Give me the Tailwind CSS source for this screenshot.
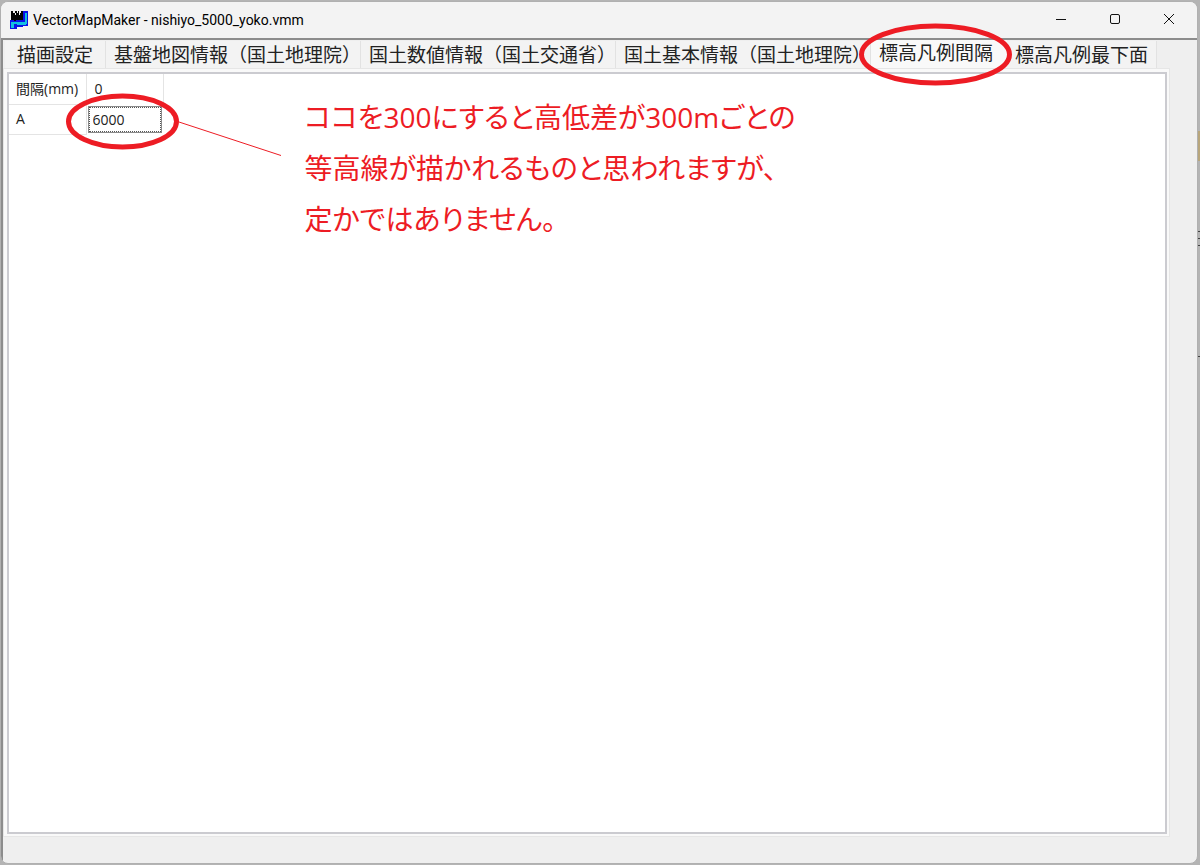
<!DOCTYPE html>
<html lang="ja">
    <head>
        <meta charset="UTF-8">
        <meta name="viewport" content="width=device-width, initial-scale=1.0">
        <title>VectorMapMaker - nishiyo_5000_yoko.vmm</title>
        <script src="https://cdn.jsdelivr.net/npm/@tailwindcss/browser@4"></script>
    </head>
    <body class="relative h-screen overflow-hidden bg-[#b4b4b4] pt-px pr-0.5 pb-px font-['Open_Sans','Noto_Sans_CJK_JP',sans-serif] text-black">

        <!-- window -->
        <div class="flex h-full flex-col overflow-hidden rounded-lg border border-[#b0b0b0] bg-[#efefef]">
            <header class="flex h-9 shrink-0 items-center bg-[#f3f3f3] pl-2">
                <svg class="h-5 w-5" viewBox="0 0 20 20" shape-rendering="crispEdges" aria-hidden="true">
                    <path d="M14 1h5v15h-5v1H8v2H1v-9h13z" fill="#0a12e8"/>
                    <path d="M16 3h2v11h-2zM2 12h6v2H5v4H2zM8 12h9v3H8z" fill="#12c0e0"/>
                    <path d="M2 1h2v2h2V1h2v2h1V1h1v2h2V1h2v9H7v1H5v-1H2z" fill="#050505"/>
                    <path d="M6 3h1v2H6zM10 3h1v2h-1z" fill="#f3f3f3"/>
                </svg>
                <h1 class="ml-1 font-['Roboto',sans-serif] text-[14px] leading-5">VectorMapMaker - nishiyo_5000_yoko.vmm</h1>
                <div class="ml-auto flex h-full">
                    <button class="flex w-14 items-center justify-center" aria-label="最小化">
                        <svg class="h-3 w-3" viewBox="0 0 12 12" fill="none" stroke="#111"><path d="M1 5.500h10"/></svg>
                    </button>
                    <button class="flex w-13 items-center justify-center" aria-label="最大化">
                        <svg class="h-3 w-3" viewBox="0 0 12 12" fill="none" stroke="#111"><rect x="1.5" y=".5" width="9" height="9" rx="1.5"/></svg>
                    </button>
                    <button class="flex w-14 items-center justify-center" aria-label="閉じる">
                        <svg class="h-3 w-3" viewBox="0 0 12 12" fill="none" stroke="#111"><path d="M1 0l10 10M11 0L1 10"/></svg>
                    </button>
                </div>
            </header>

            <main class="flex min-h-0 flex-1 flex-col border-t-2 border-l-2 border-[#8c8c8c] pr-[27px] pb-[26px]">
                <!-- tabs -->
                <div role="tablist" class="flex h-7 shrink-0 items-end pl-0.5 text-[19px] leading-6 font-normal whitespace-nowrap text-[#222] font-['Noto_Sans_CJK_JP',sans-serif]">
                    <button role="tab" class="h-[27px] w-[101px] border-r border-[#e2e2e2] bg-[#f3f3f3] pb-0.5 pl-3 text-left">描画設定</button>
                    <button role="tab" class="h-[27px] w-[255px] border-r border-[#e2e2e2] bg-[#f3f3f3] pb-0.5 pl-2 text-left">基盤地図情報（国土地理院）</button>
                    <button role="tab" class="h-[27px] w-[255px] border-r border-[#e2e2e2] bg-[#f3f3f3] pb-0.5 pl-2 text-left">国土数値情報（国土交通省）</button>
                    <button role="tab" class="h-[27px] w-[255px] border-r border-[#e2e2e2] bg-[#f3f3f3] pb-0.5 pl-2 text-left">国土基本情報（国土地理院）</button>
                    <button role="tab" aria-selected="true" class="h-7 w-[136px] bg-[#f9f9f9] pb-1 pl-2 text-left">標高凡例間隔</button>
                    <button role="tab" class="h-[27px] w-[150px] border-r border-[#e2e2e2] bg-[#f3f3f3] pb-0.5 pl-2 text-left">標高凡例最下面</button>
                </div>

                <!-- page -->
                <div class="flex min-h-0 flex-1 flex-col border border-[#e6e6e6] bg-[#f9f9f9] pt-[3px] pr-0.5 pb-0.5 pl-[3px]">
                    <section class="flex flex-1 items-start border-2 border-[#cbcbd0] bg-white">
                        <table class="table-fixed border-collapse text-[14px] leading-5 text-[#222]">
                            <thead>
                                <tr class="h-[30px]">
                                    <th class="w-[77px] border-r border-b border-[#e4e4e4] pl-[7px] text-left font-normal whitespace-nowrap" scope="col">間隔(mm)</th>
                                    <th class="w-[77px] border-r border-[#e4e4e4] pl-2 text-left font-normal" scope="col">0</th>
                                </tr>
                            </thead>
                            <tbody>
                                <tr class="h-[30px]">
                                    <th class="border-r border-b border-[#e4e4e4] pl-[7px] text-left font-normal" scope="row">A</th>
                                    <td class="p-0">
                                        <input class="ml-px block h-[27px] w-[74px] border border-[#8a8a8a] bg-white px-1 leading-5 outline-1 -outline-offset-2 outline-dotted outline-[#555]" type="text" value="6000" aria-label="A">
                                    </td>
                                </tr>
                            </tbody>
                        </table>
                        <p class="mt-[18px] ml-[141px] text-[28px] leading-[51px] font-normal text-[#ed1c24] [font-feature-settings:'palt']">
                            ココを300にすると高低差が300mごとの<br>
                            等高線が描かれるものと思われますが、<br>
                            定かではありません。
                        </p>
                    </section>
                </div>
            </main>
        </div>

        <!-- red marks over the window -->
        <svg class="pointer-events-none absolute top-0 left-0" width="1200" height="400" viewBox="0 0 1200 400" fill="none" stroke="#ed1c24" aria-hidden="true">
            <ellipse cx="122.5" cy="121.5" rx="54" ry="25.5" stroke-width="5"/>
            <ellipse cx="935.5" cy="54.5" rx="74" ry="28.5" stroke-width="5"/>
            <path d="M179 122l102 33.500"/>
            <path d="M1199 131v30" stroke="#b8a67c" stroke-width="2"/>
            <path d="M1198 231.500h2M1198 238.500h2M1198 245.500h2M1198 356.500h2" stroke="#444"/>
        </svg>
    </body>
</html>
